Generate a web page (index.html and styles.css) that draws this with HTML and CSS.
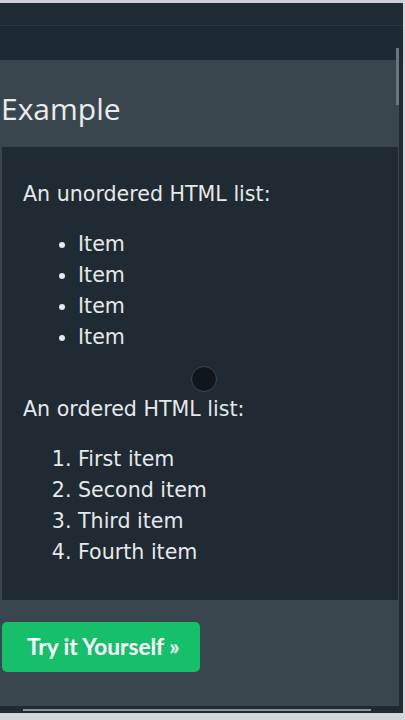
FILE: index.html
```html
<!DOCTYPE html>
<html lang="en">
<head>
    <meta charset="UTF-8">
    <meta name="viewport" content="width=device-width, initial-scale=1.0">
    <title>HTML Lists Example</title>
    <link rel="stylesheet" href="styles.css">
</head>
<body>
    <div class="page">
        <div class="topbar"></div>
        <div class="subbar"></div>

        <div class="panel">
            <h2 class="panel-title">Example</h2>

            <div class="example">
                <p>An unordered HTML list:</p>
                <ul>
                    <li>Item</li>
                    <li>Item</li>
                    <li>Item</li>
                    <li>Item</li>
                </ul>
                <p class="second">An ordered HTML list:</p>
                <ol>
                    <li>First item</li>
                    <li>Second item</li>
                    <li>Third item</li>
                    <li>Fourth item</li>
                </ol>
                <span class="touch-dot"></span>
            </div>

            <a class="try-button" href="#">Try it Yourself &raquo;</a>
        </div>

        <div class="bottombar"><span class="hscroll"></span></div>
        <span class="vscroll"></span>
    </div>
</body>
</html>
```

FILE: styles.css
```css
html, body { margin: 0; padding: 0; }
body { background: #d3d7db; height: 720px; overflow: hidden; }
.page { position: relative; background: #1f2a32; border-top: 3px solid #cdd1d5; margin-right: 2px; }
.topbar { height: 22px; border-bottom: 1px solid #2d3941; background: #1f2b33; }
.subbar { height: 34px; background: #1d2a33; }
.panel { background: #3a464d; margin-right: 4px; padding: 1px 0 34px 0; }
.panel-title { margin: 28px 0 0 1px; height: 58px; font-family: "Open Sans", sans-serif; font-weight: 400; font-size: 30px; line-height: 40px; color: #e9ecee; }
.example { position: relative; background: #1f2a32; margin: 0 1px 0 2px; padding: 32px 22px 32px 21px; font-family: "DejaVu Sans", Verdana, sans-serif; font-size: 20.6px; line-height: 31px; color: #e6e8ea; }
.example p { margin: 0; }
.example p.second { margin-top: 41px; }
.example ul, .example ol { margin: 19px 0 0 0; padding-left: 55px; }
.touch-dot { position: absolute; left: 189px; top: 219px; width: 24px; height: 24px; border-radius: 50%; background: #10171c; border: 1px solid #3b474e; }
.try-button { display: inline-block; margin: 22px 0 0 2px; width: 198px; height: 50px; box-sizing: border-box; padding-left: 25px; border-radius: 5px; background: #16bf69; color: #fff; text-decoration: none; font-family: "Lato", sans-serif; font-weight: 700; font-size: 22.6px; line-height: 50px; }
.bottombar { position: relative; height: 7px; background: #1f2a32; }
.hscroll { position: absolute; left: 23px; top: 3px; width: 348px; height: 2px; background: #8a9297; }
.vscroll { position: absolute; right: 4px; top: 45px; width: 3px; height: 57px; background: #6b757b; }
```
